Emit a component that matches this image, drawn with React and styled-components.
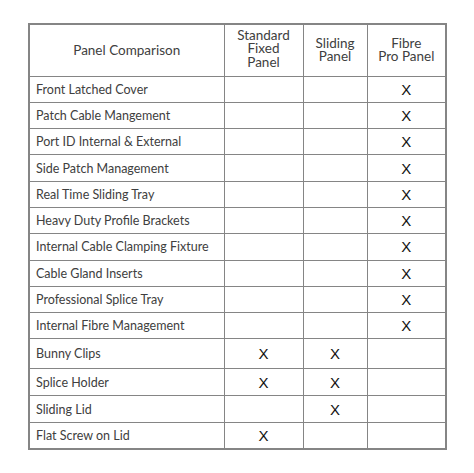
import React from "react";
import styled, { createGlobalStyle } from "styled-components";

const Global = createGlobalStyle`
  html, body { margin: 0; padding: 0; background: #ffffff; }
`;

const Page = styled.div`
  padding: 23px 0 0 28px;
`;

const Table = styled.table`
  border-collapse: collapse;
  width: 417px;
  table-layout: fixed;
  font-family: "Lato", "Liberation Sans", sans-serif;
  color: #404040;
  border: 2px solid #858585;
`;

const Col = styled.col`
  width: ${(p) => p.$w}px;
`;

const HeadCell = styled.th`
  border: 1.5px solid #858585;
  font-weight: 400;
  font-size: 13.5px;
  line-height: 13.5px;
  text-align: center;
  vertical-align: middle;
  height: 52px;
  padding: 0 0 ${(p) => (p.$lift ? "3px" : "0")} 0;
  box-sizing: border-box;
`;

const Row = styled.tr`
  height: ${(p) => p.$h}px;
`;

const LabelCell = styled.td`
  border: 1.5px solid #858585;
  font-size: 12.5px;
  padding: 0 0 0 6px;
  vertical-align: middle;
  white-space: nowrap;
`;

const MarkCell = styled.td`
  border: 1.5px solid #858585;
  text-align: center;
  vertical-align: middle;
  padding: 0;
  font-family: "Liberation Sans", Arial, sans-serif;
  font-size: 15px;
  color: #111;
`;

const rows = [
  ["Front Latched Cover", 0, 0, 1, 26.3],
  ["Patch Cable Mangement", 0, 0, 1, 26.3],
  ["Port ID Internal & External", 0, 0, 1, 26.3],
  ["Side Patch Management", 0, 0, 1, 26.3],
  ["Real Time Sliding Tray", 0, 0, 1, 26.3],
  ["Heavy Duty Profile Brackets", 0, 0, 1, 26.3],
  ["Internal Cable Clamping Fixture", 0, 0, 1, 26.3],
  ["Cable Gland Inserts", 0, 0, 1, 26.3],
  ["Professional Splice Tray", 0, 0, 1, 26.3],
  ["Internal Fibre Management", 0, 0, 1, 26.3],
  ["Bunny Clips", 1, 1, 0, 30],
  ["Splice Holder", 1, 1, 0, 27],
  ["Sliding Lid", 0, 1, 0, 26.5],
  ["Flat Screw on Lid", 1, 0, 0, 26.5],
];

export default function App() {
  return (
    <>
      <Global />
      <Page>
        <Table>
          <colgroup>
            <Col $w={195} />
            <Col $w={79} />
            <Col $w={64} />
            <Col $w={79} />
          </colgroup>
          <thead>
            <tr>
              <HeadCell>Panel Comparison</HeadCell>
              <HeadCell $lift>
                Standard
                <br />
                Fixed
                <br />
                Panel
              </HeadCell>
              <HeadCell>
                Sliding
                <br />
                Panel
              </HeadCell>
              <HeadCell>
                Fibre
                <br />
                Pro Panel
              </HeadCell>
            </tr>
          </thead>
          <tbody>
            {rows.map(([label, a, b, c, h]) => (
              <Row key={label} $h={h}>
                <LabelCell>{label}</LabelCell>
                <MarkCell>{a ? "X" : ""}</MarkCell>
                <MarkCell>{b ? "X" : ""}</MarkCell>
                <MarkCell>{c ? "X" : ""}</MarkCell>
              </Row>
            ))}
          </tbody>
        </Table>
      </Page>
    </>
  );
}
